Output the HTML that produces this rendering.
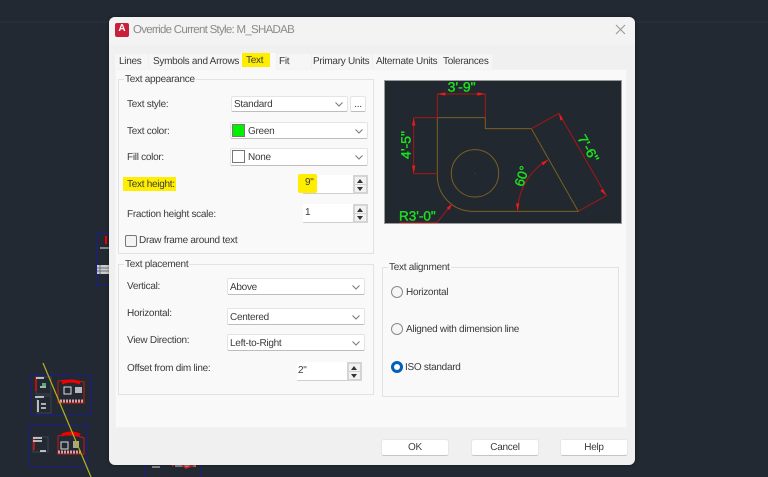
<!DOCTYPE html>
<html><head><meta charset="utf-8"><style>
html,body{margin:0;padding:0;width:768px;height:477px;overflow:hidden;background:#222932}
body{position:relative;font-family:"Liberation Sans",sans-serif;font-size:10px;letter-spacing:-.28px;color:#3a3a3a;text-rendering:geometricPrecision}
div,span{position:absolute;box-sizing:border-box}
.t{white-space:nowrap;line-height:14px;filter:blur(.25px);margin-top:1px}
.g{border:1px solid #e2e2e2}
.lg{background:#f9f9f9;padding:0 1px;white-space:nowrap;line-height:12px;filter:blur(.25px);margin-top:1px}
.c{background:#fff;border:1px solid #e4e4e4;border-bottom:1px solid #bdbdbd;border-radius:2px;line-height:15px;padding-left:2px;white-space:nowrap}
.c svg{position:absolute;right:4px;top:5px}
.i{background:#fff;border-bottom:1px solid #cfcfcf;line-height:15px;padding-left:2px}
.s{background:#d4d4d4;width:15px}
.s b{position:absolute;left:2px;width:11px;height:7px;background:#f2f2f2}
.s i{position:absolute;left:4px;width:0;height:0;border-left:3.5px solid transparent;border-right:3.5px solid transparent}
.b{background:#fff;border:1px solid #e6e6e6;border-bottom:1px solid #c4c4c4;border-radius:3px;text-align:center;line-height:15px;height:17px;top:439px}
.r{width:12px;height:12px;border-radius:50%;border:1px solid #8a8a8a;background:#f6f6f6;left:391px}
.tab{background:#f6f6f6;top:54px;height:15px}
</style></head><body>
<svg style="position:absolute;left:0;top:0;filter:blur(.35px)" width="768" height="477" viewBox="0 0 768 477">
<path d="M0 22H108M636 22H768" stroke="#2b323c" stroke-width="1"/>
<g fill="none" stroke="#1c1c8a" stroke-width="1">
<rect x="96.500" y="233.500" width="20" height="52"/>
<rect x="31.500" y="374.500" width="59" height="41"/>
<rect x="29.500" y="424.500" width="58" height="42"/>
<rect x="145.500" y="460" width="55" height="30"/>
</g>
<rect x="97" y="265" width="12" height="9" fill="#c9ccd0"/>
<path d="M97 268H109M97 271H109M100 265V274" stroke="#6b7077"/>
<path d="M100 248H109" stroke="#ddd"/><path d="M106 236V244" stroke="#e00" stroke-width="2"/>
<g fill="none">
<rect x="36" y="377" width="15" height="17" stroke="#3e444c"/>
<rect x="37" y="396" width="14" height="17" stroke="#3e444c"/>
<path d="M36 377V391" stroke="#e01010" stroke-width="1.500"/>
<path d="M36 378H44M35 397H44M38 400V412" stroke="#e8e8e8" stroke-width="1.500"/>
<path d="M40 387H46M41 404H46M41 408H46" stroke="#ddd" stroke-width="1.500"/>
<rect x="42" y="383" width="4" height="3" fill="#4cae7a"/>
<path d="M58 384V381Q70 379 84 382V403H58Z" stroke="#c81818"/>
<path d="M62 383Q71 379 80 383" stroke="#f00000" stroke-width="3"/>
<rect x="64" y="387" width="7" height="7" stroke="#ddd"/>
<rect x="75" y="387" width="7" height="6" fill="#b8b8b8"/>
<path d="M60 401H83" stroke="#d8a0a0" stroke-width="3" stroke-dasharray="2 1"/>
<rect x="33" y="437" width="15" height="15" stroke="#3e444c"/>
<path d="M34 437V450" stroke="#e01010" stroke-width="1.500"/>
<path d="M33 438H42M33 441H42M40 451H46" stroke="#e8e8e8" stroke-width="1.500"/>
<path d="M58 439V436Q70 433 84 438V454H58Z" stroke="#c81818"/>
<path d="M62 435Q71 431 80 435" stroke="#f00000" stroke-width="3"/>
<rect x="61" y="442" width="7" height="7" stroke="#ddd"/>
<rect x="73" y="441" width="6" height="7" fill="#a8a888"/>
<path d="M58 452H82" stroke="#d8a0a0" stroke-width="3" stroke-dasharray="2 1"/>
<path d="M148 461H158M152 467H160M175 466H196" stroke="#ddd"/>
<path d="M172 466L178 462L186 468L194 465" stroke="#e02020" stroke-width="1.500"/>
</g>
<path d="M43 363L91 477" stroke="#b4b420" stroke-width="1.200"/>
</svg>

<div style="left:109px;top:17px;width:526px;height:448px;background:#f0f0f0;border-radius:6px;box-shadow:0 0 3px rgba(0,0,0,.4)"></div>
<div style="left:109px;top:17px;width:526px;height:28px;background:#f3f3f3;border-radius:6px 6px 0 0"></div>
<div style="left:115px;top:23px;width:14px;height:14px;background:#c8203a;border-radius:2px;color:#fff;font-size:10px;font-weight:bold;text-align:center;line-height:11px;letter-spacing:0">A</div>
<div class="t" style="left:133px;top:23px;margin-top:0;font-size:11.5px;letter-spacing:-.72px;color:#8b8b8b">Override Current Style: M_SHADAB</div>
<svg style="position:absolute;left:615px;top:24px" width="11" height="11"><path d="M1 1L10 10M10 1L1 10" stroke="#9a9a9a" stroke-width="1.100"/></svg>

<div class="tab" style="left:115px;width:33px"></div>
<div class="tab" style="left:149px;width:92px"></div>
<div class="tab" style="left:277px;width:34px"></div>
<div class="tab" style="left:312px;width:60px"></div>
<div class="tab" style="left:373px;width:65px"></div>
<div class="tab" style="left:439px;width:53px"></div>
<div style="left:115px;top:69px;width:512px;height:359px;background:#f9f9f9;border:1px solid #f3f3f3"></div>
<div style="left:241px;top:53px;width:35px;height:17px;background:#f9f9f9"></div>
<div style="left:242px;top:53px;width:28px;height:14px;background:#ffee00"></div>
<div class="t" style="left:119px;top:54px">Lines</div>
<div class="t" style="left:153px;top:54px">Symbols and Arrows</div>
<div class="t" style="left:246px;top:53px">Text</div>
<div class="t" style="left:279px;top:54px">Fit</div>
<div class="t" style="left:313px;top:54px">Primary Units</div>
<div class="t" style="left:376px;top:54px">Alternate Units</div>
<div class="t" style="left:443px;top:54px">Tolerances</div>

<div class="g" style="left:118px;top:79px;width:256px;height:175px"></div>
<div class="lg" style="left:124px;top:73px">Text appearance</div>
<div class="g" style="left:118px;top:264px;width:256px;height:131px"></div>
<div class="lg" style="left:124px;top:258px">Text placement</div>
<div class="g" style="left:382px;top:267px;width:237px;height:130px"></div>
<div class="lg" style="left:388px;top:261px">Text alignment</div>

<div class="t" style="left:127px;top:97px">Text style:</div>
<div class="c" style="left:231px;top:96px;width:117px;height:16px">Standard<svg width="8" height="5"><path d="M.5 .5L4 4L7.500 .5" fill="none" stroke="#777"/></svg></div>
<div class="c" style="left:350px;top:96px;width:16px;height:16px;padding:0;text-align:center;line-height:15px">...</div>
<div class="t" style="left:127px;top:124px">Text color:</div>
<div class="c" style="left:230px;top:122px;width:138px;height:17px;padding-left:17px;line-height:17px">Green<svg width="8" height="5" style="top:6px"><path d="M.5 .5L4 4L7.500 .5" fill="none" stroke="#777"/></svg></div>
<div style="left:232px;top:124px;width:13px;height:13px;background:#00f000;border:1px solid #777"></div>
<div class="t" style="left:127px;top:150px">Fill color:</div>
<div class="c" style="left:230px;top:148px;width:138px;height:18px;padding-left:17px;line-height:18px">None<svg width="8" height="5" style="top:6px"><path d="M.5 .5L4 4L7.500 .5" fill="none" stroke="#777"/></svg></div>
<div style="left:232px;top:150px;width:13px;height:13px;background:#fff;border:1px solid #777"></div>

<div style="left:123px;top:177px;width:53px;height:14px;background:#ffee00"></div>
<div class="t" style="left:127px;top:177px">Text height:</div>
<div class="i" style="left:303px;top:175px;width:50px;height:19px"></div>
<div style="left:298px;top:174px;width:19px;height:19px;background:#ffee00;border-radius:2px"></div>
<div class="t" style="left:305px;top:175px">9"</div>
<div class="s" style="left:353px;top:175px;height:19px"><b style="top:2px"></b><b style="top:10px"></b><i style="top:4px;border-bottom:4px solid #333"></i><i style="top:12px;border-top:4px solid #333"></i></div>

<div class="t" style="left:127px;top:207px">Fraction height scale:</div>
<div class="i" style="left:303px;top:204px;width:50px;height:19px"><span style="left:2px;top:1px">1</span></div>
<div class="s" style="left:353px;top:204px;height:19px"><b style="top:2px"></b><b style="top:10px"></b><i style="top:4px;border-bottom:4px solid #333"></i><i style="top:12px;border-top:4px solid #333"></i></div>

<div style="left:125px;top:235px;width:12px;height:12px;background:#f4f4f4;border:1px solid #777;border-radius:2px"></div>
<div class="t" style="left:139px;top:233px">Draw frame around text</div>

<div class="t" style="left:127px;top:279px">Vertical:</div>
<div class="c" style="left:227px;top:278px;width:138px;height:17px;line-height:17px">Above<svg width="8" height="5" style="top:6px"><path d="M.5 .5L4 4L7.500 .5" fill="none" stroke="#777"/></svg></div>
<div class="t" style="left:127px;top:306px">Horizontal:</div>
<div class="c" style="left:227px;top:308px;width:138px;height:17px;line-height:17px">Centered<svg width="8" height="5" style="top:6px"><path d="M.5 .5L4 4L7.500 .5" fill="none" stroke="#777"/></svg></div>
<div class="t" style="left:127px;top:333px">View Direction:</div>
<div class="c" style="left:227px;top:334px;width:138px;height:17px;line-height:17px">Left-to-Right<svg width="8" height="5" style="top:6px"><path d="M.5 .5L4 4L7.500 .5" fill="none" stroke="#777"/></svg></div>
<div class="t" style="left:127px;top:361px">Offset from dim line:</div>
<div class="i" style="left:297px;top:362px;width:50px;height:19px"><span style="left:1px;top:1px">2"</span></div>
<div class="s" style="left:347px;top:362px;height:19px"><b style="top:2px"></b><b style="top:10px"></b><i style="top:4px;border-bottom:4px solid #333"></i><i style="top:12px;border-top:4px solid #333"></i></div>

<div style="left:384px;top:80px;width:238px;height:144px;background:#212830;border:1px solid #9a9a9a"></div>
<svg style="position:absolute;left:375px;top:10px;filter:blur(.2px)" width="265" height="220" viewBox="0 0 795 660">
<g fill="none" stroke="#7a6020" stroke-width="3">
<path d="M187 323H331V356H469L610 604H293A106 107 0 0 1 187 497Z"/>
<circle cx="300" cy="490" r="71"/>
</g>
<g fill="none" stroke="#a81616" stroke-width="3">
<path d="M187 323V252H331V323M187 323H116V491H187M469 356L552 310L694 557L610 604"/>
<path d="M428 604A182 182 0 0 1 520 449"/>
<path d="M73 637H187L232 580"/>
</g>
<g fill="#ee1a1a">
<path d="M187 252l24-5v10zM331 252l-24-5v10zM116 323l-5 24h10zM116 491l-5-24h10z"/>
<path d="M552 310l4 22 8-5zM694 557l-18-15 8-5z"/>
<path d="M428 604l-5-24h10zM520 449l-21 9 6 8z"/>
<path d="M232 580l-17 14 8 6z"/>
</g>
<circle cx="300" cy="490" r="1.500" fill="#c02020"/>
<g fill="#1fe01f" font-family="'Liberation Sans',sans-serif" font-size="40" stroke="#1fe01f" stroke-width="1.200" style="letter-spacing:0">
<text x="218" y="245" textLength="84" lengthAdjust="spacingAndGlyphs">3'-9"</text>
<text transform="translate(106 447) rotate(-90)" textLength="84" lengthAdjust="spacingAndGlyphs">4'-5"</text>
<text transform="translate(444 532) rotate(-72)" textLength="62" lengthAdjust="spacingAndGlyphs">60°</text>
<text transform="translate(606 384) rotate(60)" textLength="88" lengthAdjust="spacingAndGlyphs">7'-6"</text>
<text x="72" y="632" textLength="110" lengthAdjust="spacingAndGlyphs">R3'-0"</text>
</g>
</svg>

<div class="r" style="top:286px"></div>
<div class="t" style="left:406px;top:285px">Horizontal</div>
<div class="r" style="top:323px"></div>
<div class="t" style="left:406px;top:322px">Aligned with dimension line</div>
<div class="r" style="top:361px;border:3.500px solid #0060bb;background:#fff"></div>
<div class="t" style="left:405px;top:360px">ISO standard</div>

<div class="b" style="left:381px;width:68px">OK</div>
<div class="b" style="left:471px;width:68px">Cancel</div>
<div class="b" style="left:560px;width:68px">Help</div>
</body></html>
